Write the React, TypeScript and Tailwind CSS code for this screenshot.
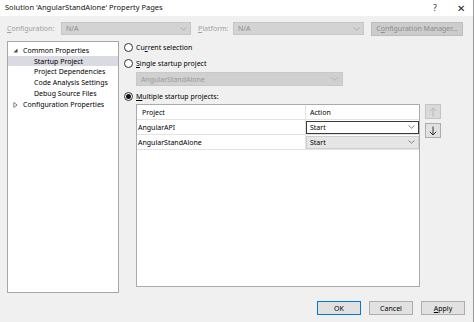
import React from "react";

const Chevron = ({ color = "#888" }: { color?: string }) => (
  <svg width="7" height="4" viewBox="0 0 7 4" className="shrink-0">
    <path d="M0.5 0.5 L3.5 3.2 L6.5 0.5" fill="none" stroke={color} strokeWidth="0.9" />
  </svg>
);

const Radio = ({ checked }: { checked?: boolean }) => (
  <div className="w-[9px] h-[9px] rounded-full border border-[#333] bg-white flex items-center justify-center shrink-0">
    {checked && <div className="w-[5px] h-[5px] rounded-full bg-[#111]" />}
  </div>
);

const U = ({ children }: { children: React.ReactNode }) => <span className="underline underline-offset-1">{children}</span>;

export default function App() {
  return (
    <div
      className="w-[474px] h-[322px] bg-[#f0f0f0] flex flex-col text-[7px] text-black overflow-hidden border-r border-[#9a9a9a] leading-none whitespace-nowrap"
      style={{ fontFamily: '"Noto Sans", "Open Sans", sans-serif' }}
    >
      {/* title bar */}
      <div className="h-[16px] bg-white flex items-center pl-[5px] shrink-0">
        <span className="text-[7.5px] text-[#111]">Solution 'AngularStandAlone' Property Pages</span>
        <div className="flex-1" />
        <span className="text-[8px] text-[#222] w-[10px] text-center">?</span>
        <span className="text-[10px] text-[#222] ml-[17px] mr-[8px]">✕</span>
      </div>

      {/* configuration row */}
      <div className="flex items-center mt-[6px] h-[13px] pl-[7px] shrink-0">
        <span className="text-[#a0a0a0] w-[54px]"><U>C</U>onfiguration:</span>
        <div className="w-[130px] h-[13px] bg-[#d3d3d3] border border-[#c6c6c6] flex items-center pl-[4px] pr-[3px]">
          <span className="text-[#8c8c8c] flex-1">N/A</span>
          <Chevron color="#a8a8a8" />
        </div>
        <span className="text-[#a0a0a0] ml-[7px] w-[35px]"><U>P</U>latform:</span>
        <div className="w-[131px] h-[13px] bg-[#d3d3d3] border border-[#c6c6c6] flex items-center pl-[4px] pr-[3px]">
          <span className="text-[#8c8c8c] flex-1">N/A</span>
          <Chevron color="#a8a8a8" />
        </div>
        <div className="ml-[7px] w-[92px] h-[14px] bg-[#cccccc] border border-[#bdbdbd] flex items-center justify-center text-[#8c8c8c]">
          C<U>o</U>nfiguration Manager...
        </div>
      </div>

      {/* main */}
      <div className="flex mt-[6px] shrink-0">
        {/* tree */}
        <div className="ml-[7px] w-[112px] h-[252px] bg-white border border-[#a8a8a8] pt-[3px] flex flex-col">
          <div className="h-[11px] flex items-center pl-[5px]">
            <svg width="5" height="5" viewBox="0 0 5 5" className="mr-[5px]">
              <path d="M4.5 0.5 L4.5 4.5 L0.5 4.5 Z" fill="#444" />
            </svg>
            <span>Common Properties</span>
          </div>
          <div className="h-[10px] flex items-center pl-[26px] bg-[#dadae2]">Startup Project</div>
          <div className="h-[11px] flex items-center pl-[26px]">Project Dependencies</div>
          <div className="h-[11px] flex items-center pl-[26px]">Code Analysis Settings</div>
          <div className="h-[11px] flex items-center pl-[26px]">Debug Source Files</div>
          <div className="h-[11px] flex items-center pl-[5px]">
            <svg width="5" height="6" viewBox="0 0 5 6" className="mr-[5px]">
              <path d="M0.8 0.5 L4.2 3 L0.8 5.5 Z" fill="none" stroke="#666" strokeWidth="0.8" />
            </svg>
            <span>Configuration Properties</span>
          </div>
        </div>

        {/* right side */}
        <div className="ml-[5px] flex flex-col">
          <div className="flex items-center h-[11px] mt-[1px]">
            <Radio />
            <span className="ml-[3px]">Cu<U>r</U>rent selection</span>
          </div>
          <div className="flex items-center h-[11px] mt-[5px]">
            <Radio />
            <span className="ml-[3px]"><U>S</U>ingle startup project</span>
          </div>
          <div className="ml-[12px] mt-[3px] w-[207px] h-[14px] bg-[#d0d0d0] border border-[#c9c9c9] flex items-center pl-[4px] pr-[4px]">
            <span className="text-[#9a9a9a] flex-1">AngularStandAlone</span>
            <Chevron color="#b0b0b0" />
          </div>
          <div className="flex items-center h-[11px] mt-[5px]">
            <Radio checked />
            <span className="ml-[3px]"><U>M</U>ultiple startup projects:</span>
          </div>

          <div className="flex mt-[2px]">
            <div className="ml-[12px] w-[284px] h-[183px] bg-white border border-[#ababab] flex flex-col">
              <div className="flex h-[15px] border-b border-[#e3e3e3]">
                <div className="w-[169px] border-r border-[#e3e3e3] flex items-center pl-[5px]">Project</div>
                <div className="flex-1 flex items-center pl-[4px]">Action</div>
              </div>
              <div className="flex h-[15px] border-b border-[#e3e3e3]">
                <div className="w-[169px] border-r border-[#e3e3e3] flex items-center pl-[1px]">AngularAPI</div>
                <div className="flex-1 flex items-center">
                  <div className="w-full h-[13px] border border-[#3a3a3a] bg-white flex items-center pl-[3px] pr-[3px]">
                    <span className="flex-1">Start</span>
                    <Chevron color="#777" />
                  </div>
                </div>
              </div>
              <div className="flex h-[15px] border-b border-[#e3e3e3]">
                <div className="w-[169px] border-r border-[#e3e3e3] flex items-center pl-[1px]">AngularStandAlone</div>
                <div className="flex-1 flex items-center">
                  <div className="w-full h-[13px] border border-[#cfcfcf] bg-[#e6e6e6] flex items-center pl-[3px] pr-[3px]">
                    <span className="flex-1">Start</span>
                    <Chevron color="#777" />
                  </div>
                </div>
              </div>
            </div>
            <div className="ml-[5px] flex flex-col gap-[4px]">
              <div className="w-[16px] h-[15px] bg-[#dadada] border border-[#c4c4c4] flex items-center justify-center">
                <svg width="8" height="10" viewBox="0 0 8 10">
                  <path d="M4 9.5 L4 1 M0.8 4.2 L4 1 L7.2 4.2" fill="none" stroke="#b4b4b4" strokeWidth="0.9" />
                </svg>
              </div>
              <div className="w-[16px] h-[15px] bg-[#e1e1e1] border border-[#adadad] flex items-center justify-center">
                <svg width="8" height="10" viewBox="0 0 8 10">
                  <path d="M4 0.5 L4 9 M0.8 5.8 L4 9 L7.2 5.8" fill="none" stroke="#222" strokeWidth="0.9" />
                </svg>
              </div>
            </div>
          </div>
        </div>
      </div>

      {/* buttons */}
      <div className="flex justify-end mt-[8px] pr-[8px] gap-[8px] shrink-0">
        <div className="w-[44px] h-[14px] bg-[#e1e1e1] border border-[#0078d7] flex items-center justify-center">OK</div>
        <div className="w-[44px] h-[14px] bg-[#e1e1e1] border border-[#adadad] flex items-center justify-center">Cancel</div>
        <div className="w-[44px] h-[14px] bg-[#e1e1e1] border border-[#adadad] flex items-center justify-center"><U>A</U>pply</div>
      </div>
    </div>
  );
}
